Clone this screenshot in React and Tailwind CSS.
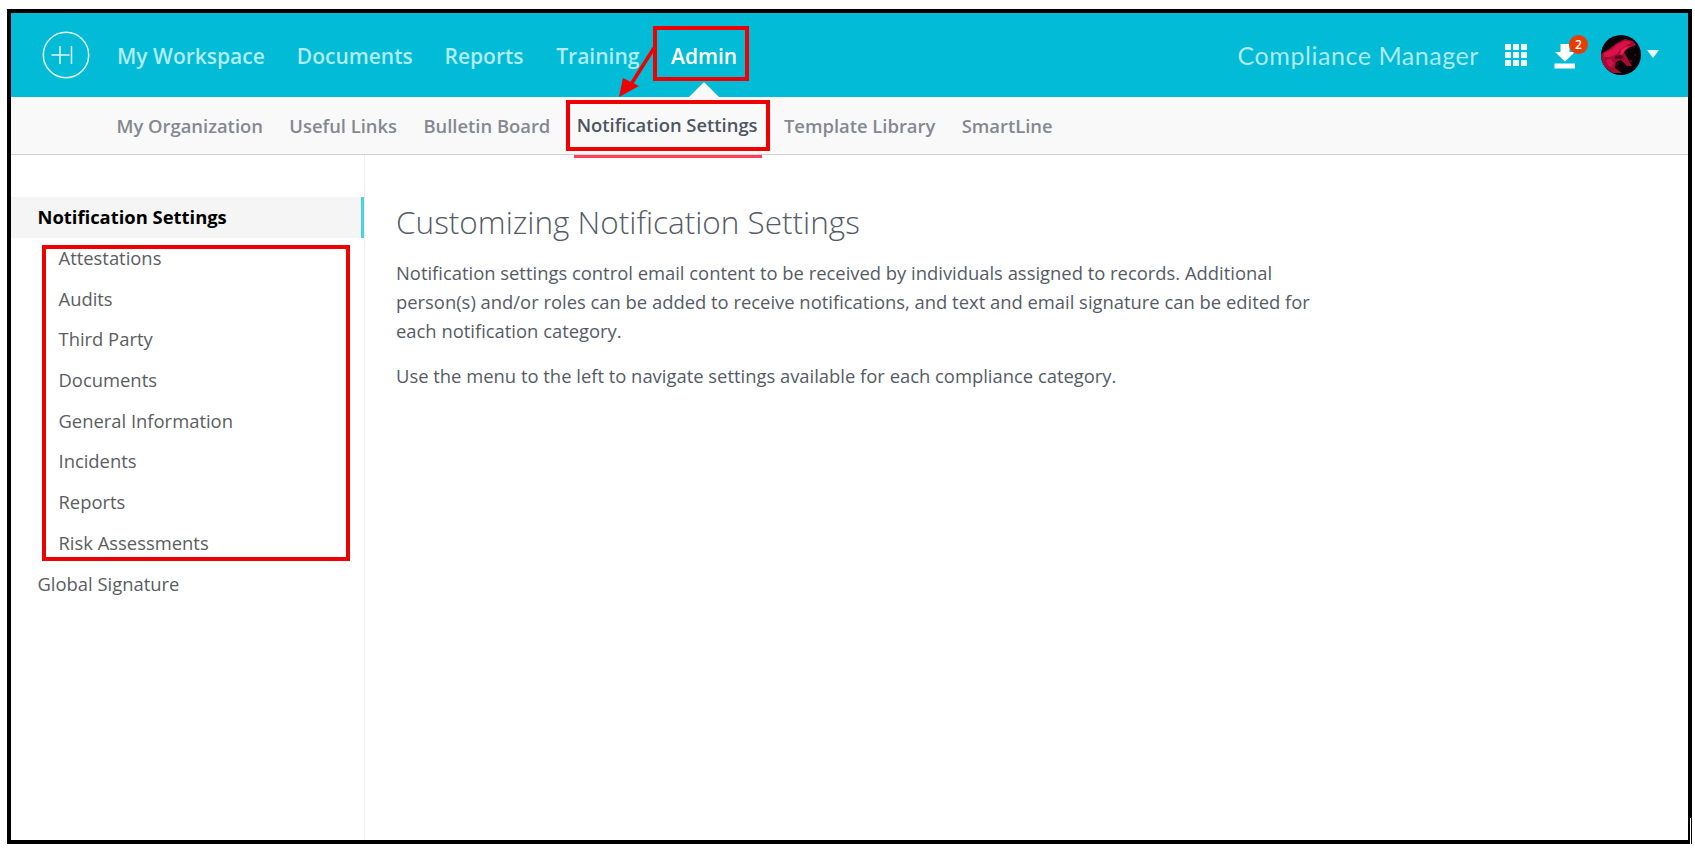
import React from 'react';

const mainNav = [
  { label: 'My Workspace', cls: 'w-[147px]' },
  { label: 'Documents', cls: 'w-[115px]' },
  { label: 'Reports', cls: 'w-[79px]' },
  { label: 'Training', cls: 'w-[82px]' },
  { label: 'Admin', cls: 'w-[66px] text-white', active: true },
];

const subNav = ['My Organization', 'Useful Links', 'Bulletin Board', 'Notification Settings', 'Template Library', 'SmartLine'];

const sideItems = ['Attestations', 'Audits', 'Third Party', 'Documents', 'General Information', 'Incidents', 'Reports', 'Risk Assessments'];

function Logo() {
  return (
    <svg width="48" height="48" viewBox="0 0 48 48" fill="none" stroke="#e6f8fb" strokeWidth="1.5">
      <circle cx="24" cy="24" r="22.7" />
      <path d="M9.5 24H27.5M18 15V33M29.5 15V33" />
    </svg>
  );
}

function GridIcon() {
  return (
    <div className="grid grid-cols-3 gap-[2px] w-[22px]">
      {Array.from({ length: 9 }).map((_, i) => (
        <div key={i} className="w-[6px] h-[6px] bg-[#eafafc]" />
      ))}
    </div>
  );
}

function DownloadIcon() {
  return (
    <div className="relative w-[22px] h-[26px]">
      <svg width="22" height="26" viewBox="0 0 22 26" fill="#ffffff">
        <path d="M6.5 0H15.5V8H21L11 17.5L1 8H6.5Z" />
        <rect x="0.5" y="19.5" width="20.5" height="5" />
      </svg>
      <span className="absolute left-[15px] top-[-9px] w-[19px] h-[19px] rounded-full bg-[#e63e00] text-white text-[12px] font-semibold leading-[19px] text-center">2</span>
    </div>
  );
}

function Avatar() {
  return (
    <svg width="40" height="40" viewBox="0 0 40 40">
      <defs>
        <clipPath id="av">
          <circle cx="20" cy="20" r="20" />
        </clipPath>
      </defs>
      <circle cx="20" cy="20" r="20" fill="#0a0206" />
      <g clipPath="url(#av)">
        <path d="M0 19L8 14L16 8L24 4L32 6L35 10L28 13L23 17L27 24L31 31L26 31L20 25L15 27L14 33L21 38L12 38L4 33L0 26Z" fill="#a40a33" />
        <path d="M3 18L10 15L17 9L24 6L31 7L26 10L20 14L16 19L9 22L3 22Z" fill="#dc1149" />
        <path d="M20 15L24 12L29 11L24 15L22 19L19 20Z" fill="#e8215a" />
        <path d="M5 25L10 24L13 28L11 33L7 30Z" fill="#d01045" />
        <path d="M14 21L20 20L23 23L18 24L14 24Z" fill="#5c0720" />
        <path d="M16 28L18 27L17 33L15 31Z" fill="#3a0514" />
        <circle cx="30" cy="26" r="1" fill="#7c0a2a" />
        <circle cx="34" cy="20" r="0.8" fill="#7c0a2a" />
      </g>
    </svg>
  );
}

export default function App() {
  return (
    <div className="relative w-[1695px] h-[849px] bg-white pl-[7px] pt-[9px] overflow-hidden font-['Open_Sans',sans-serif]">
      <div className="flex flex-col w-[1685px] h-[835px] border-4 border-black">
        <header className="flex items-center h-[84px] shrink-0 bg-[#02bbd6] pl-[31px] pr-[29px]">
          <Logo />
          <nav className="flex items-center gap-[32.75px] ml-[27px] mt-[4px]">
            {mainNav.map((item) => (
              <a key={item.label} className={`whitespace-nowrap text-[21px] font-semibold ${item.active ? '' : 'text-[#b0ecf3]'} ${item.cls}`}>
                {item.label}
              </a>
            ))}
          </nav>
          <span className="ml-auto mt-[2px] text-[25px] text-[#aeeaf2] font-['Lato',sans-serif] tracking-[0.55px]">Compliance Manager</span>
          <div className="ml-[26px]"><GridIcon /></div>
          <div className="ml-[27px] mt-[3px]"><DownloadIcon /></div>
          <div className="ml-[25px]"><Avatar /></div>
          <div className="ml-[6px] mt-[-2px] w-0 h-0 border-x-[6.5px] border-x-transparent border-t-[8px] border-t-[#e6f8fb]" />
        </header>

        <div className="flex items-center h-[58px] shrink-0 bg-[#f9f9f9] border-b border-[#d0d0d0] pl-[105.5px] gap-[26.35px] text-[18.4px] font-semibold text-[#848892]">
          {subNav.map((item) => (
            <a key={item} className={`whitespace-nowrap ${item === 'Notification Settings' ? 'text-[#4d5562] mt-[-2px]' : ''}`}>{item}</a>
          ))}
        </div>

        <div className="flex flex-1 min-h-0">
          <aside className="w-[354px] shrink-0 border-r border-[#eeeeee] pt-[42px] text-[18.4px] text-[#5a5d62]">
            <div className="flex items-center h-[41px] pl-[26.5px] pb-[1px] bg-[#f5f5f5] border-r-[3px] border-[#4dd0e1] font-bold text-black">Notification Settings</div>
            <ul>
              {sideItems.map((item) => (
                <li key={item} className="flex items-center h-[40.7px] pl-[47.5px] pb-[1px]">{item}</li>
              ))}
            </ul>
            <div className="flex items-center h-[40.7px] pl-[26.5px]">Global Signature</div>
          </aside>
          <main className="flex-1 pl-[31px] pt-[43px] text-[#555b66]">
            <h1 className="text-[31.5px] font-light leading-[48px] text-[#555b66]">Customizing Notification Settings</h1>
            <p className="w-[930px] mt-[12px] text-[18.4px] leading-[29px]">
              Notification settings control email content to be received by individuals assigned to records. Additional person(s) and/or roles can be added to receive notifications, and text and email signature can be edited for each notification category.
            </p>
            <p className="mt-[16px] text-[18.4px] leading-[29px]">Use the menu to the left to navigate settings available for each compliance category.</p>
          </main>
        </div>
      </div>

      {/* annotations drawn on top of the screenshot */}
      <div className="absolute left-[653px] top-[26px] w-[96px] h-[55px] border-4 border-[#ee0000]" />
      <div className="absolute left-[566px] top-[100px] w-[204px] h-[51px] border-4 border-[#ee0000]" />
      <div className="absolute left-[42px] top-[245px] w-[308px] h-[316px] border-4 border-[#ee0000]" />
      <div className="absolute left-[574px] top-[155px] w-[188px] h-[3px] bg-[#ff3d5f]" />
      <svg className="absolute left-[610px] top-[40px]" width="50" height="64" viewBox="0 0 50 64" fill="#ee0000">
        <path d="M44 8L20 46" stroke="#ee0000" strokeWidth="3.5" />
        <path d="M9 57L13 38L29 46Z" />
      </svg>
      <div className="absolute left-[689px] top-[82px] w-0 h-0 border-x-[15px] border-x-transparent border-b-[15px] border-b-[#f9f9f9]" />
      <div className="absolute left-[1690px] top-[818px] w-px h-[26px] bg-white" />
    </div>
  );
}
